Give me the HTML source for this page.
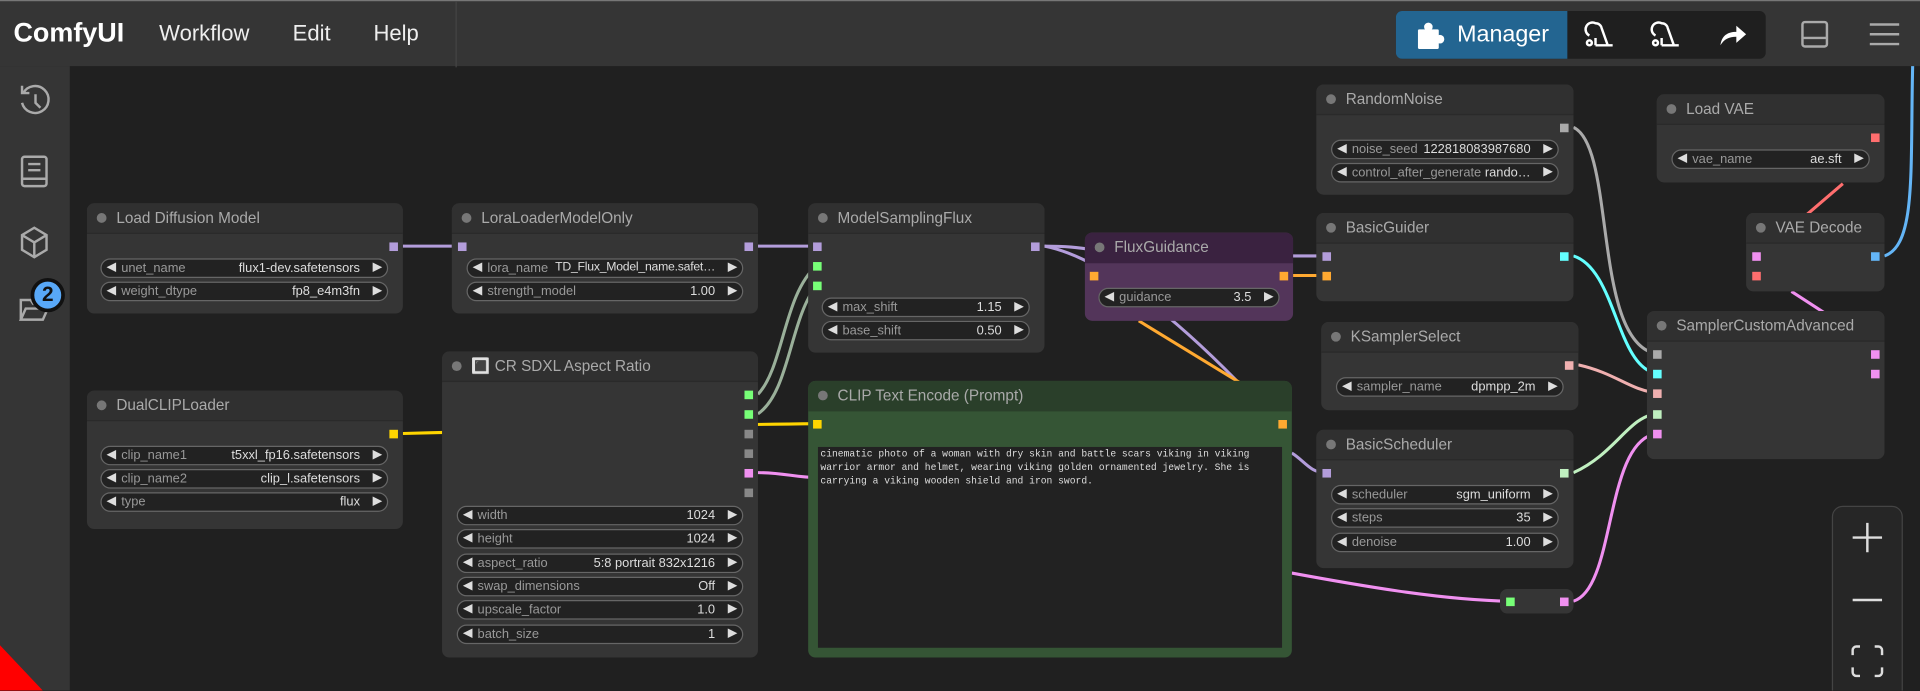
<!DOCTYPE html>
<html><head><meta charset="utf-8"><style>
*{box-sizing:border-box;margin:0;padding:0}
body{width:1920px;height:690px;overflow:hidden;background:#202020;font-family:"Liberation Sans",sans-serif}
#w{position:absolute;left:0;top:0;width:1568px;height:564px;transform:scale(1.22449);transform-origin:0 0;background:#202020;overflow:hidden}
.top{position:absolute;left:0;top:0;width:1568px;height:54px;background:#353535;border-top:1px solid #777}
.side{position:absolute;left:0;top:54px;width:57px;height:510px;background:#353535}
.n{position:absolute;background:#353535;border-radius:6px;overflow:hidden}
.n .t{height:25px;background:#303030;color:#aaa;font-size:12.5px;line-height:25px;padding-left:24px;position:relative;border-bottom:1px solid #2a2a2a}
.n .t:before{content:"";position:absolute;left:8px;top:8px;width:8px;height:8px;border-radius:50%;background:#777}
.s{position:absolute;width:7px;height:7px}
.wd{position:absolute;height:16px;border:1px solid #666;border-radius:8px;background:#222;font-size:10.5px;line-height:14px;color:#999;padding:0 18px 0 16px;white-space:nowrap}
.wd:before{content:"◀";position:absolute;left:4px;color:#ddd;font-size:10px}
.wd:after{content:"▶";position:absolute;right:4px;color:#ddd;font-size:10px}
.wd b{font-weight:normal;color:#ddd;position:absolute;right:22px;top:0}
.menu{position:absolute;top:16px;color:#eee;font-size:18px}
</style></head><body><div id="w">
<div class="top">
<div style="position:absolute;left:11px;top:13px;color:#fff;font-size:22px;font-weight:bold">ComfyUI</div>
<div class="menu" style="left:130px">Workflow</div>
<div class="menu" style="left:239px">Edit</div>
<div class="menu" style="left:305px">Help</div>
<div style="position:absolute;left:372px;top:0;width:1px;height:54px;background:#444"></div>
<div style="position:absolute;left:1140px;top:8px;width:302px;height:39px;background:#1f1f1f;border-radius:5px"></div>
<div style="position:absolute;left:1140px;top:8px;width:140px;height:39px;background:#236591;border-radius:5px 0 0 5px;color:#fff;font-size:19px;line-height:39px;padding-left:50px">Manager</div>
<svg style="position:absolute;left:1155px;top:15px" width="26" height="26" viewBox="0 0 26 26" fill="#fff"><rect x="3" y="8" width="17" height="16" rx="1"/><circle cx="11.5" cy="6" r="3.5"/><circle cx="21" cy="16" r="3.5"/></svg>
<svg style="position:absolute;left:1292px;top:14px" width="32" height="26" viewBox="0 0 32 26" fill="none" stroke="#fff" stroke-width="2"><circle cx="6" cy="20" r="2"/><path d="M6 14a5 5 0 0 1 5-10a5 5 0 0 1 5 4l5 14M11 22h14M11 16v6"/></svg>
<svg style="position:absolute;left:1346px;top:14px" width="32" height="26" viewBox="0 0 32 26" fill="none" stroke="#fff" stroke-width="2"><circle cx="6" cy="20" r="2"/><path d="M6 14a5 5 0 0 1 5-10a5 5 0 0 1 5 4l5 14M11 22h14M11 16v6"/></svg>
<svg style="position:absolute;left:1402px;top:16px" width="26" height="22" viewBox="0 0 26 22"><path d="M3 20c1-8 6-11 13-11V4l8 7-8 7v-5c-6 0-10 2-13 7z" fill="#fff"/></svg>
<svg style="position:absolute;left:1470px;top:15px" width="24" height="24" viewBox="0 0 24 24" fill="none" stroke="#aaa" stroke-width="2"><rect x="2" y="2" width="20" height="20" rx="2"/><path d="M2 15h20"/></svg>
<svg style="position:absolute;left:1526px;top:16px" width="26" height="22" viewBox="0 0 26 22" stroke="#aaa" stroke-width="2"><path d="M1 3h24M1 11h24M1 19h24"/></svg>
</div>
<div class="side">
<svg style="position:absolute;left:15px;top:14px" width="28" height="30" viewBox="0 0 28 30" fill="none" stroke="#aaa" stroke-width="2"><path d="M4 8a11 11 0 1 1 -1 8M3 2v6h6M14 9v7l4 4"/></svg>
<svg style="position:absolute;left:16px;top:72px" width="24" height="28" viewBox="0 0 24 28" fill="none" stroke="#aaa" stroke-width="2"><rect x="2" y="2" width="20" height="24" rx="2"/><path d="M2 20h20M7 8h10M7 13h10"/></svg>
<svg style="position:absolute;left:15px;top:130px" width="26" height="28" viewBox="0 0 26 28" fill="none" stroke="#aaa" stroke-width="2"><path d="M13 2l10 6v12l-10 6-10-6V8zM3 8l10 6 10-6M13 14v12"/></svg>
<svg style="position:absolute;left:15px;top:185px" width="26" height="26" viewBox="0 0 26 26" fill="none" stroke="#aaa" stroke-width="2"><path d="M2 22V6h8l2 3h10v4M2 22l4-9h18l-4 9z"/></svg>
<div style="position:absolute;left:25px;top:173px;width:28px;height:28px;border-radius:50%;background:#58a8f8;border:3px solid #111;color:#111;font-weight:bold;font-size:17px;text-align:center;line-height:22px">2</div>
</div>
<div style="position:absolute;left:0;top:527px;width:0;height:0;border-bottom:37px solid #f00;border-right:35px solid transparent"></div>

<svg style="position:absolute;left:0;top:0" width="1568" height="564" fill="none" stroke-width="2.5">
<path d="M329 201H369" stroke="#b39ddb"/>
<path d="M619 201H660" stroke="#b39ddb"/>
<path d="M329 354C500 350 500 348 667 346" stroke="#ffd500"/>
<path d="M619 322C640 300 640 240 667 217" stroke="#9ab09a"/>
<path d="M619 338C645 320 645 260 667 233" stroke="#9ab09a"/>
<path d="M619 386C640 386 650 390 667 390" stroke="#f090f0"/>
<path d="M853 201C870 201 880 202 893 204" stroke="#b39ddb"/>
<path d="M853 201C900 210 960 260 1010 311" stroke="#b39ddb"/>
<path d="M1056 225H1082" stroke="#ffa931"/>
<path d="M930 262L1015 314" stroke="#ffa931"/>
<path d="M1056 209H1082" stroke="#b39ddb"/>
<path d="M1055 370C1065 376 1070 386 1082 386" stroke="#b39ddb"/>
<path d="M1285 104C1320 120 1300 280 1353 289" stroke="#aaa"/>
<path d="M1285 209C1320 220 1320 300 1353 305" stroke="#64ffff"/>
<path d="M1289 298C1320 305 1330 318 1353 321" stroke="#f0b0b0"/>
<path d="M1285 386C1320 370 1330 340 1353 338" stroke="#c0f0c0"/>
<path d="M1285 491C1320 480 1310 360 1353 354" stroke="#f090f0"/>
<path d="M1055 468C1120 480 1180 490 1233 491" stroke="#f090f0"/>
<path d="M1475 150L1440 180" stroke="#ff6e6e" transform="translate(30 0)"/>
<path d="M1463 238L1500 262" stroke="#f090f0"/>
<path d="M1539 209C1565 200 1560 140 1562 54" stroke="#64b5f6"/>
</svg>

<div class="n" style="left:71px;top:166px;width:258px;height:90px"><div class="t">Load Diffusion Model</div>
<div class="s" style="left:247px;top:32px;background:#b39ddb"></div>
<div class="wd" style="left:11px;top:45px;width:235px">unet_name<b>flux1-dev.safetensors</b></div>
<div class="wd" style="left:11px;top:64px;width:235px">weight_dtype<b>fp8_e4m3fn</b></div></div>
<div class="n" style="left:369px;top:166px;width:250px;height:90px"><div class="t">LoraLoaderModelOnly</div>
<div class="s" style="left:5px;top:32px;background:#b39ddb"></div><div class="s" style="left:239px;top:32px;background:#b39ddb"></div>
<div class="wd" style="left:12px;top:45px;width:226px">lora_name<b style="font-size:10px;letter-spacing:-0.2px">TD_Flux_Model_name.safet…</b></div>
<div class="wd" style="left:12px;top:64px;width:226px">strength_model<b>1.00</b></div></div>
<div class="n" style="left:660px;top:166px;width:193px;height:122px"><div class="t">ModelSamplingFlux</div>
<div class="s" style="left:4px;top:32px;background:#b39ddb"></div><div class="s" style="left:4px;top:48px;background:#7f7"></div><div class="s" style="left:4px;top:64px;background:#7f7"></div>
<div class="s" style="left:182px;top:32px;background:#b39ddb"></div>
<div class="wd" style="left:11px;top:77px;width:170px">max_shift<b>1.15</b></div>
<div class="wd" style="left:11px;top:96px;width:170px">base_shift<b>0.50</b></div></div>
<div class="n" style="left:886px;top:190px;width:170px;height:72px;background:#53355a"><div class="t" style="background:#3a2240;border-bottom:none">FluxGuidance</div>
<div class="s" style="left:4px;top:32px;background:#ffa931"></div><div class="s" style="left:159px;top:32px;background:#ffa931"></div>
<div class="wd" style="left:11px;top:45px;width:148px">guidance<b>3.5</b></div></div>
<div class="n" style="left:1075px;top:69px;width:210px;height:90px"><div class="t">RandomNoise</div>
<div class="s" style="left:199px;top:32px;background:#aaa"></div>
<div class="wd" style="left:12px;top:45px;width:186px">noise_seed<b>122818083987680</b></div>
<div class="wd" style="left:12px;top:64px;width:186px">control_after_generate<b>rando…</b></div></div>
<div class="n" style="left:1075px;top:174px;width:210px;height:72px"><div class="t">BasicGuider</div>
<div class="s" style="left:5px;top:32px;background:#b39ddb"></div><div class="s" style="left:5px;top:48px;background:#ffa931"></div>
<div class="s" style="left:199px;top:32px;background:#64ffff"></div></div>
<div class="n" style="left:1079px;top:263px;width:210px;height:72px"><div class="t">KSamplerSelect</div>
<div class="s" style="left:199px;top:32px;background:#f0b0b0"></div>
<div class="wd" style="left:12px;top:45px;width:186px">sampler_name<b>dpmpp_2m</b></div></div>
<div class="n" style="left:1075px;top:351px;width:210px;height:113px"><div class="t">BasicScheduler</div>
<div class="s" style="left:5px;top:32px;background:#b39ddb"></div><div class="s" style="left:199px;top:32px;background:#c0f0c0"></div>
<div class="wd" style="left:12px;top:45px;width:186px">scheduler<b>sgm_uniform</b></div>
<div class="wd" style="left:12px;top:64px;width:186px">steps<b>35</b></div>
<div class="wd" style="left:12px;top:84px;width:186px">denoise<b>1.00</b></div></div>
<div class="n" style="left:1353px;top:77px;width:186px;height:72px"><div class="t">Load VAE</div>
<div class="s" style="left:175px;top:32px;background:#ff6e6e"></div>
<div class="wd" style="left:12px;top:45px;width:162px">vae_name<b>ae.sft</b></div></div>
<div class="n" style="left:1426px;top:174px;width:113px;height:64px"><div class="t">VAE Decode</div>
<div class="s" style="left:5px;top:32px;background:#f090f0"></div><div class="s" style="left:5px;top:48px;background:#ff6e6e"></div>
<div class="s" style="left:102px;top:32px;background:#64b5f6"></div></div>
<div class="n" style="left:1345px;top:254px;width:194px;height:121px"><div class="t">SamplerCustomAdvanced</div>
<div class="s" style="left:5px;top:32px;background:#aaa"></div><div class="s" style="left:5px;top:48px;background:#64ffff"></div><div class="s" style="left:5px;top:64px;background:#f0b0b0"></div><div class="s" style="left:5px;top:81px;background:#c0f0c0"></div><div class="s" style="left:5px;top:97px;background:#f090f0"></div>
<div class="s" style="left:183px;top:32px;background:#f090f0"></div><div class="s" style="left:183px;top:48px;background:#f090f0"></div></div>
<div class="n" style="left:71px;top:319px;width:258px;height:113px"><div class="t">DualCLIPLoader</div>
<div class="s" style="left:247px;top:32px;background:#ffd500"></div>
<div class="wd" style="left:11px;top:45px;width:235px">clip_name1<b>t5xxl_fp16.safetensors</b></div>
<div class="wd" style="left:11px;top:64px;width:235px">clip_name2<b>clip_l.safetensors</b></div>
<div class="wd" style="left:11px;top:83px;width:235px">type<b>flux</b></div></div>
<div class="n" style="left:361px;top:287px;width:258px;height:250px"><div class="t">🔳 CR SDXL Aspect Ratio</div>
<div class="s" style="left:247px;top:32px;background:#7f7"></div><div class="s" style="left:247px;top:48px;background:#7f7"></div><div class="s" style="left:247px;top:64px;background:#888"></div><div class="s" style="left:247px;top:80px;background:#888"></div><div class="s" style="left:247px;top:96px;background:#f090f0"></div><div class="s" style="left:247px;top:112px;background:#888"></div>
<div class="wd" style="left:12px;top:126px;width:234px">width<b>1024</b></div>
<div class="wd" style="left:12px;top:145px;width:234px">height<b>1024</b></div>
<div class="wd" style="left:12px;top:165px;width:234px">aspect_ratio<b>5:8 portrait 832x1216</b></div>
<div class="wd" style="left:12px;top:184px;width:234px">swap_dimensions<b>Off</b></div>
<div class="wd" style="left:12px;top:203px;width:234px">upscale_factor<b>1.0</b></div>
<div class="wd" style="left:12px;top:223px;width:234px">batch_size<b>1</b></div></div>
<div class="n" style="left:660px;top:311px;width:395px;height:226px;background:#355535"><div class="t" style="background:#2a3f2a;border-bottom:none">CLIP Text Encode (Prompt)</div>
<div class="s" style="left:4px;top:32px;background:#ffd500"></div><div class="s" style="left:384px;top:32px;background:#ffa931"></div>
<div style="position:absolute;left:8px;top:54px;width:379px;height:164px;background:#222;color:#ddd;font-family:'Liberation Mono',monospace;font-size:7.9px;line-height:11px;padding:1px 2px">cinematic photo of a woman with dry skin and battle scars viking in viking warrior armor and helmet, wearing viking golden ornamented jewelry. She is carrying a viking wooden shield and iron sword.</div></div>
<div class="n" style="left:1225px;top:481px;width:60px;height:20px"><div class="s" style="left:5px;top:7px;background:#7f7"></div><div class="s" style="left:49px;top:7px;background:#f090f0"></div></div>
<div style="position:absolute;left:1496px;top:413px;width:58px;height:170px;background:#262626;border:1px solid #444;border-radius:9px"></div>
<svg style="position:absolute;left:1510px;top:425px" width="30" height="130" viewBox="0 0 30 130" fill="none" stroke="#ddd" stroke-width="2"><path d="M15 2v24M3 14h24M3 65h24M3 110v-4a3 3 0 0 1 3-3h3M21 103h3a3 3 0 0 1 3 3v4M27 120v4a3 3 0 0 1-3 3h-3M9 127H6a3 3 0 0 1-3-3v-4"/></svg>
</div></body></html>
